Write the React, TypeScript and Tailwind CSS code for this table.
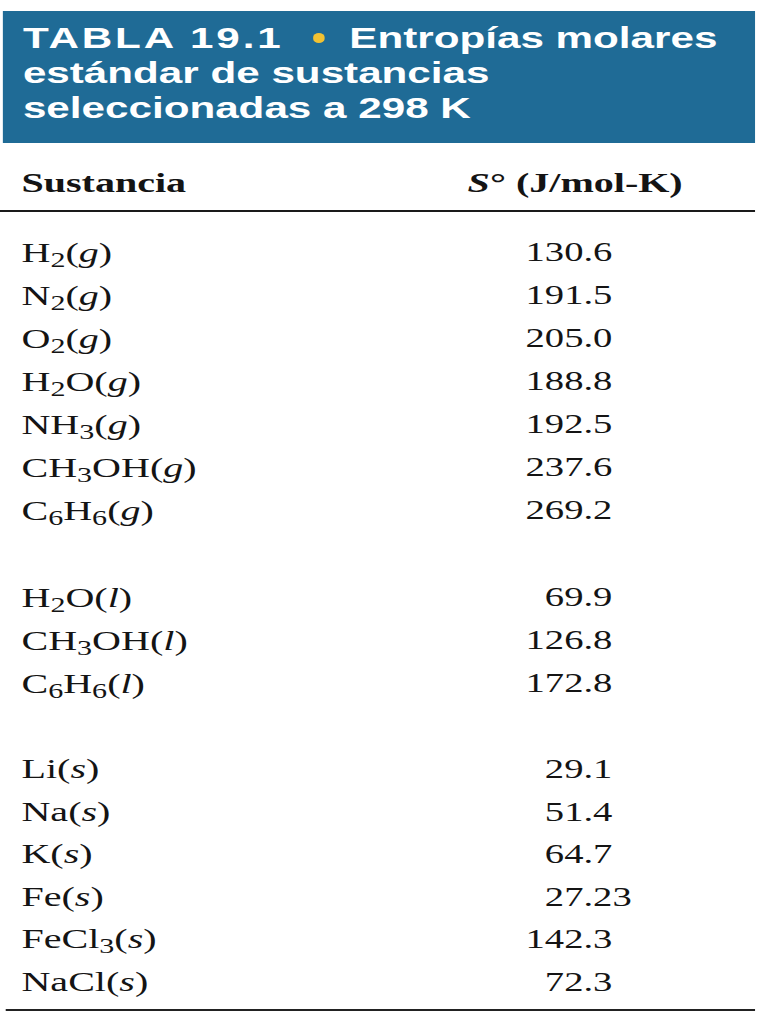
import React from "react";

type Row = { name: React.ReactNode; int: string; frac: string };

const g = <i>g</i>;
const l = <i>l</i>;
const s = <i>s</i>;

const gases: Row[] = [
  { name: <>H<sub>2</sub>({g})</>, int: "130", frac: "6" },
  { name: <>N<sub>2</sub>({g})</>, int: "191", frac: "5" },
  { name: <>O<sub>2</sub>({g})</>, int: "205", frac: "0" },
  { name: <>H<sub>2</sub>O({g})</>, int: "188", frac: "8" },
  { name: <>NH<sub>3</sub>({g})</>, int: "192", frac: "5" },
  { name: <>CH<sub>3</sub>OH({g})</>, int: "237", frac: "6" },
  { name: <>C<sub>6</sub>H<sub>6</sub>({g})</>, int: "269", frac: "2" },
];

const liquids: Row[] = [
  { name: <>H<sub>2</sub>O({l})</>, int: "69", frac: "9" },
  { name: <>CH<sub>3</sub>OH({l})</>, int: "126", frac: "8" },
  { name: <>C<sub>6</sub>H<sub>6</sub>({l})</>, int: "172", frac: "8" },
];

const solids: Row[] = [
  { name: <>Li({s})</>, int: "29", frac: "1" },
  { name: <>Na({s})</>, int: "51", frac: "4" },
  { name: <>K({s})</>, int: "64", frac: "7" },
  { name: <>Fe({s})</>, int: "27", frac: "23" },
  { name: <>FeCl<sub>3</sub>({s})</>, int: "142", frac: "3" },
  { name: <>NaCl({s})</>, int: "72", frac: "3" },
];

const Rows = ({ rows, leading }: { rows: Row[]; leading: string }) => (
  <div className={`flex flex-col ${leading}`}>
    {rows.map((r, i) => (
      <div key={i} className="flex">
        <div className="w-[354px] pl-[15px] text-[28px]">{r.name}</div>
        <div className="w-[54px] text-right">{r.int}</div>
        <div>.{r.frac}</div>
      </div>
    ))}
  </div>
);

export default function App() {
  return (
    <div className="h-[1024px] w-[768px] overflow-hidden bg-white">
      {/* the scan is stretched sideways, so the whole sheet is laid out narrow and widened */}
      <div className="w-[537px] origin-top-left scale-x-[1.43] pt-[11px]">
        <div className="ml-[2px] w-[526px] bg-[#1f6b96] pb-[18px] pl-[14px] pt-[9px] font-['Liberation_Sans',Arial,sans-serif] text-[29.5px] font-bold leading-[35px] text-white">
          <div className="flex items-center">
            <span className="tracking-[2px]">TABLA 19.1</span>
            <span className="ml-[21px] mr-[17px] h-[10px] w-[8px] rounded-full bg-[#f2c232]" />
            <span>Entropías molares</span>
          </div>
          <div>estándar de sustancias</div>
          <div>seleccionadas a 298 K</div>
        </div>

        <div className="w-[528px] font-['Liberation_Serif','Times_New_Roman',serif] text-[#141414]">
          <div className="flex border-b-2 border-[#1a1a1a] pb-[6px] pt-[18px] text-[28px] font-bold leading-[43px]">
            <div className="w-[327px] pl-[15px]">Sustancia</div>
            <div>
              <i>S</i>° (J/mol-K)
            </div>
          </div>

          <div className="pt-[19px] text-[27px]">
            <Rows rows={gases} leading="leading-[43px]" />
            <div className="h-[44px]" />
            <Rows rows={liquids} leading="leading-[43px]" />
            <div className="h-[43px]" />
            <Rows rows={solids} leading="leading-[42.5px]" />
          </div>
          <div className="ml-[4px] mt-[6px] h-[2px] w-[524px] bg-[#222]" />
        </div>
      </div>
    </div>
  );
}
